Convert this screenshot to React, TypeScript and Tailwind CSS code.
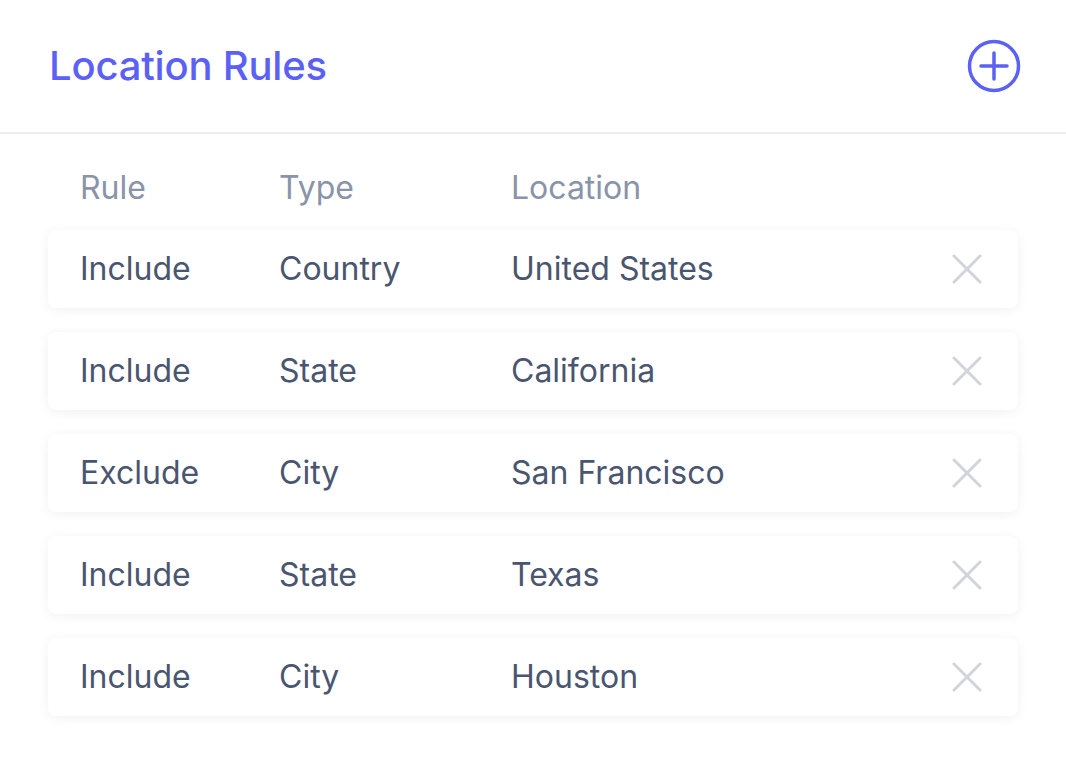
import React from 'react';

interface LocationRule {
  rule: 'Include' | 'Exclude';
  type: string;
  location: string;
}

const rules: LocationRule[] = [
  { rule: 'Include', type: 'Country', location: 'United States' },
  { rule: 'Include', type: 'State', location: 'California' },
  { rule: 'Exclude', type: 'City', location: 'San Francisco' },
  { rule: 'Include', type: 'State', location: 'Texas' },
  { rule: 'Include', type: 'City', location: 'Houston' },
];

const PlusCircle = () => (
  <svg width="54" height="54" viewBox="0 0 54 54" fill="none" stroke="#5b61f5" strokeWidth="3.5" strokeLinecap="round">
    <circle cx="27" cy="27" r="24.5" />
    <path d="M27 14v26M14 27h26" />
  </svg>
);

const CloseIcon = () => (
  <svg width="30" height="30" viewBox="0 0 30 30" fill="none" stroke="#d1d5db" strokeWidth="3" strokeLinecap="round">
    <path d="M2 2l26 26M28 2L2 28" />
  </svg>
);

const App: React.FC = () => {
  return (
    <div className="min-h-screen bg-white font-['Inter',sans-serif]">
      {/* Header */}
      <div className="flex items-center justify-between h-[134px] pl-[49px] pr-[45px] border-b-2 border-[#ececf2]">
        <h1 className="text-[40px] font-medium text-[#5b61f5] tracking-[-0.2px]">Location Rules</h1>
        <button className="flex items-center justify-center">
          <PlusCircle />
        </button>
      </div>

      <div className="px-12 pt-[31px]">
        {/* Column headers */}
        <div className="flex items-center px-8 h-[46px] text-[32px] text-[#8a94a8]">
          <div className="w-[199px]">Rule</div>
          <div className="w-[232px]">Type</div>
          <div>Location</div>
        </div>

        {/* Rows */}
        <div className="mt-[19px] flex flex-col gap-6">
          {rules.map((r, i) => (
            <div
              key={i}
              className="flex items-center h-[78px] pl-8 pr-9 bg-white rounded-lg shadow-[0_2px_12px_rgba(0,0,0,0.06)] text-[32px] text-[#4a5670]"
            >
              <div className="w-[199px]">{r.rule}</div>
              <div className="w-[232px]">{r.type}</div>
              <div className="flex-1">{r.location}</div>
              <button className="flex items-center justify-center">
                <CloseIcon />
              </button>
            </div>
          ))}
        </div>
      </div>
    </div>
  );
};

export default App;
